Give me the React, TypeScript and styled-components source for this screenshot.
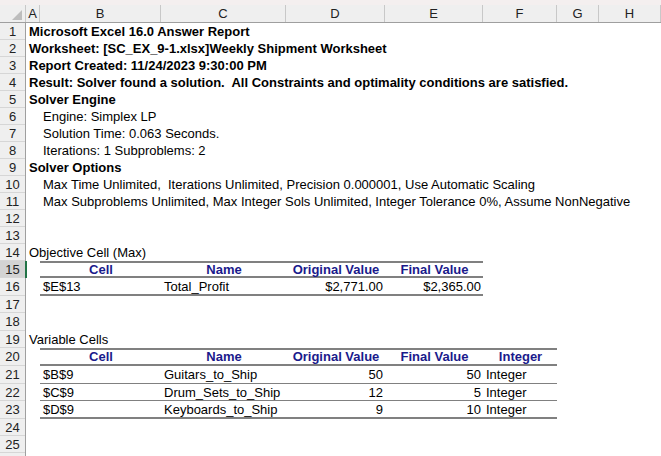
import styled, { createGlobalStyle } from 'styled-components';

const GlobalStyle = createGlobalStyle`
  html, body {
    margin: 0;
    padding: 0;
    background: #ffffff;
  }
  body {
    font-family: "Liberation Sans", Arial, sans-serif;
    overflow: hidden;
  }
`;

const COLUMNS = '26px 14px 121px 125px 99px 98px 74px 42px 1fr';
const LINE = '#808080';

type Edge = 'thick' | 'thin' | undefined;

const edgeShadow = (top: Edge, bottom: Edge) => {
  const parts: string[] = [];
  if (top) parts.push(`inset 0 ${top === 'thick' ? 2 : 1}px 0 ${LINE}`);
  if (bottom) parts.push(`inset 0 -${bottom === 'thick' ? 2 : 1}px 0 ${LINE}`);
  return parts.length ? parts.join(', ') : 'none';
};

const Sheet = styled.div`
  width: 661px;
  height: 456px;
  overflow: hidden;
  background: #ffffff;
  font-size: 13px;
  color: #000000;
`;

const TopStrip = styled.div`
  height: 5px;
  background: #f4efef;
`;

const ColumnBar = styled.div`
  display: grid;
  grid-template-columns: ${COLUMNS};
  height: 17px;
  background: #efefef;
  border-bottom: 1px solid #9f9f9f;
`;

const Corner = styled.div`
  position: relative;
  border-right: 1px solid #c8c8c8;
`;

const CornerTriangle = styled.svg`
  position: absolute;
  right: 3px;
  bottom: 2px;
`;

const ColumnLabel = styled.div`
  text-align: center;
  line-height: 17px;
  color: #222222;
  border-right: 1px solid #c8c8c8;
`;

const GridRow = styled.div<{ $height: number }>`
  display: grid;
  grid-template-columns: ${COLUMNS};
  height: ${(p) => p.$height}px;
  line-height: ${(p) => p.$height}px;
`;

const RowNumber = styled.div<{ $selected?: boolean }>`
  grid-column: 1;
  text-align: center;
  color: #222222;
  background: ${(p) => (p.$selected ? '#d3d3d3' : '#efefef')};
  border-right: ${(p) => (p.$selected ? '2px solid #217346' : '1px solid #9f9f9f')};
  margin-right: ${(p) => (p.$selected ? '-1px' : '0')};
  box-shadow: inset 0 -1px 0 #d6d6d6;
  position: relative;
  z-index: 1;
`;

const Cell = styled.div<{
  $col: string;
  $align?: 'left' | 'right' | 'center';
  $bold?: boolean;
  $head?: boolean;
  $top?: Edge;
  $bottom?: Edge;
}>`
  grid-column: ${(p) => p.$col};
  white-space: pre;
  overflow: visible;
  padding: 0 2px 0 3px;
  text-align: ${(p) => p.$align ?? 'left'};
  font-weight: ${(p) => (p.$bold || p.$head ? 700 : 400)};
  color: ${(p) => (p.$head ? '#1a1a8c' : '#000000')};
  box-shadow: ${(p) => edgeShadow(p.$top, p.$bottom)};
`;

// heights of rows 1..25, then a sliver of row 26 at the bottom edge
const ROW_HEIGHTS = [17, 17, 17, 17, 17, 17, 17, 17, 17, 17, 17, 17, 17, 17, 17, 18, 17, 18, 17, 18, 18, 17, 18, 17, 17, 17];

const letters = ['A', 'B', 'C', 'D', 'E', 'F', 'G', 'H'];

const titleRows: Record<number, { text: string; col: string; bold?: boolean }> = {
  1: { text: 'Microsoft Excel 16.0 Answer Report', col: '2 / -1', bold: true },
  2: { text: 'Worksheet: [SC_EX_9-1.xlsx]Weekly Shipment Worksheet', col: '2 / -1', bold: true },
  3: { text: 'Report Created: 11/24/2023 9:30:00 PM', col: '2 / -1', bold: true },
  4: {
    text: 'Result: Solver found a solution.  All Constraints and optimality conditions are satisfied.',
    col: '2 / -1',
    bold: true,
  },
  5: { text: 'Solver Engine', col: '2 / -1', bold: true },
  6: { text: 'Engine: Simplex LP', col: '3 / -1' },
  7: { text: 'Solution Time: 0.063 Seconds.', col: '3 / -1' },
  8: { text: 'Iterations: 1 Subproblems: 2', col: '3 / -1' },
  9: { text: 'Solver Options', col: '2 / -1', bold: true },
  10: {
    text: 'Max Time Unlimited,  Iterations Unlimited, Precision 0.000001, Use Automatic Scaling',
    col: '3 / -1',
  },
  11: {
    text: 'Max Subproblems Unlimited, Max Integer Sols Unlimited, Integer Tolerance 0%, Assume NonNegative',
    col: '3 / -1',
  },
  14: { text: 'Objective Cell (Max)', col: '2 / -1' },
  19: { text: 'Variable Cells', col: '2 / -1' },
};

const variables = [
  { cell: '$B$9', name: 'Guitars_to_Ship', original: '50', final: '50' },
  { cell: '$C$9', name: 'Drum_Sets_to_Ship', original: '12', final: '5' },
  { cell: '$D$9', name: 'Keyboards_to_Ship', original: '9', final: '10' },
];

const renderCells = (row: number) => {
  const title = titleRows[row];
  if (title) {
    return (
      <Cell $col={title.col} $bold={title.bold}>
        {title.text}
      </Cell>
    );
  }
  if (row === 15) {
    return ['Cell', 'Name', 'Original Value', 'Final Value'].map((h, i) => (
      <Cell key={h} $col={`${i + 3}`} $align="center" $head $top="thick" $bottom="thick">
        {h}
      </Cell>
    ));
  }
  if (row === 16) {
    return (
      <>
        <Cell $col="3" $bottom="thick">$E$13</Cell>
        <Cell $col="4" $bottom="thick">Total_Profit</Cell>
        <Cell $col="5" $align="right" $bottom="thick">$2,771.00</Cell>
        <Cell $col="6" $align="right" $bottom="thick">$2,365.00</Cell>
      </>
    );
  }
  if (row === 20) {
    return ['Cell', 'Name', 'Original Value', 'Final Value', 'Integer'].map((h, i) => (
      <Cell key={h} $col={`${i + 3}`} $align="center" $head $top="thick" $bottom="thick">
        {h}
      </Cell>
    ));
  }
  if (row >= 21 && row <= 23) {
    const v = variables[row - 21];
    const edge: Edge = row === 23 ? 'thick' : 'thin';
    return (
      <>
        <Cell $col="3" $bottom={edge}>{v.cell}</Cell>
        <Cell $col="4" $bottom={edge}>{v.name}</Cell>
        <Cell $col="5" $align="right" $bottom={edge}>{v.original}</Cell>
        <Cell $col="6" $align="right" $bottom={edge}>{v.final}</Cell>
        <Cell $col="7" $bottom={edge}>Integer</Cell>
      </>
    );
  }
  return null;
};

export default function App() {
  return (
    <>
      <GlobalStyle />
      <Sheet>
        <TopStrip />
        <ColumnBar>
          <Corner>
            <CornerTriangle width="10" height="10" viewBox="0 0 10 10">
              <polygon points="10,0 10,10 0,10" fill="#bdbdbd" />
            </CornerTriangle>
          </Corner>
          {letters.map((l) => (
            <ColumnLabel key={l}>{l}</ColumnLabel>
          ))}
        </ColumnBar>
        {ROW_HEIGHTS.map((h, i) => {
          const row = i + 1;
          return (
            <GridRow key={row} $height={h}>
              <RowNumber $selected={row === 15}>{row <= 25 ? row : ''}</RowNumber>
              {renderCells(row)}
            </GridRow>
          );
        })}
      </Sheet>
    </>
  );
}
